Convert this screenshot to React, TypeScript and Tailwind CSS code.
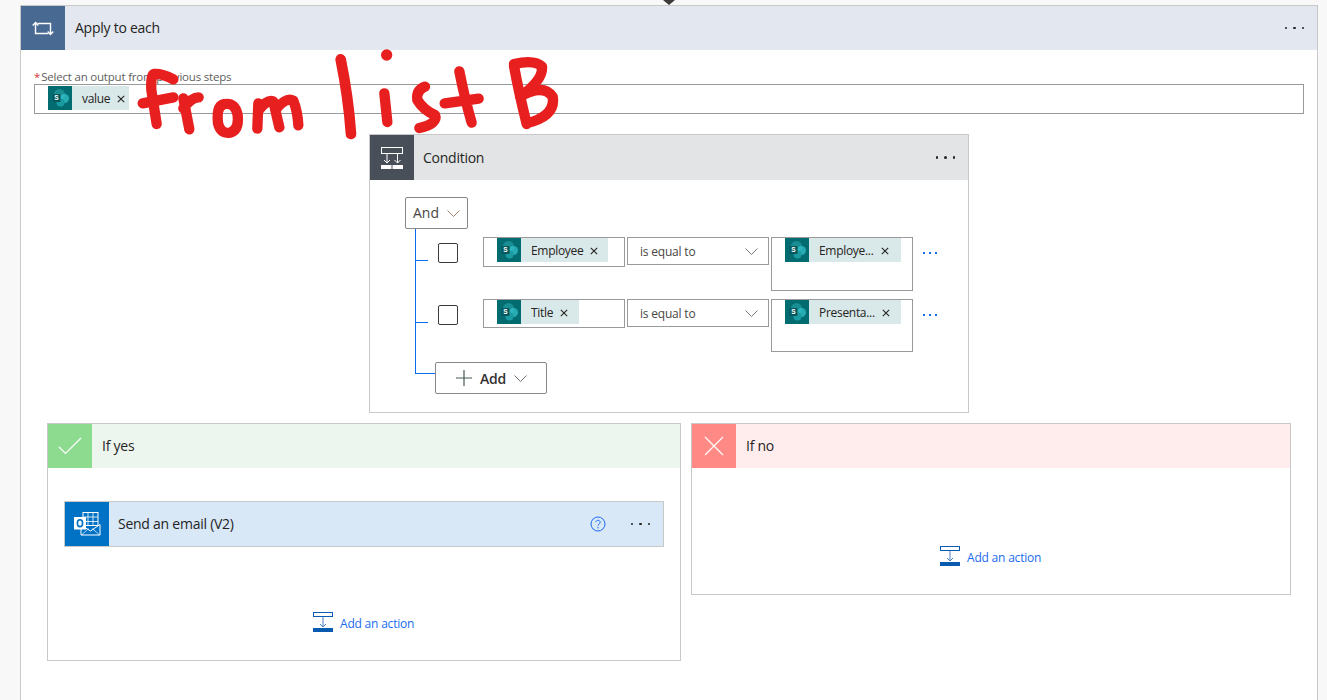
import React from "react";

const FONT = "font-['Open_Sans','Noto_Sans',sans-serif]";

function Dots({ color = "bg-[#252423]" }: { color?: string }) {
  return (
    <div className="flex gap-[6px] items-center">
      <span className={`w-[2.5px] h-[2.5px] rounded-full ${color}`} />
      <span className={`w-[2.5px] h-[2.5px] rounded-full ${color}`} />
      <span className={`w-[2.5px] h-[2.5px] rounded-full ${color}`} />
    </div>
  );
}

function BlueDots() {
  return (
    <div className="flex gap-1 items-center">
      <span className="w-[2px] h-[2px] bg-[#1a6cf0]" />
      <span className="w-[2px] h-[2px] bg-[#1a6cf0]" />
      <span className="w-[2px] h-[2px] bg-[#1a6cf0]" />
    </div>
  );
}

function SharePointIcon() {
  return (
    <div className="w-6 h-6 bg-[#036c70] flex items-center justify-center shrink-0">
      <svg width="24" height="24" viewBox="0 0 24 24">
        <circle cx="11.5" cy="8.5" r="5.5" fill="#1a8f93" />
        <circle cx="16.5" cy="12.5" r="4.5" fill="#37c6d0" opacity="0.7" />
        <circle cx="12.5" cy="16.5" r="4" fill="#1a9ba1" />
        <rect x="4.5" y="8" width="8" height="8" rx="1" fill="#04585c" />
        <text x="8.5" y="14.3" fontSize="6.5" fontWeight="700" fill="#fff" textAnchor="middle" fontFamily="Liberation Sans">S</text>
      </svg>
    </div>
  );
}

function Chip({ label, className }: { label: string; className: string }) {
  return (
    <div className={`flex items-center h-6 bg-[#d9e8e8] text-[12px] text-[#252423] ${className}`}>
      <SharePointIcon />
      <span className="ml-[10px] tracking-[-0.3px] mt-[1px] whitespace-nowrap">{label}</span>
      <svg className="ml-[7px] mt-[2px] shrink-0" width="8" height="8" viewBox="0 0 8 8" fill="none" stroke="#252423" strokeWidth="1.1">
        <path d="M.8.8l6.4 6.4M7.2.8L.8 7.2" />
      </svg>
    </div>
  );
}

function Chevron({ color = "#777" }: { color?: string }) {
  return (
    <svg width="13" height="7" viewBox="0 0 13 7" fill="none" stroke={color} strokeWidth="1">
      <path d="M.5.5l6 6 6-6" />
    </svg>
  );
}

function ConditionRow({ left, right, rowH, boxH }: { left: React.ReactNode; right: React.ReactNode; rowH: string; boxH: string }) {
  return (
    <div className="flex items-start">
      <div className="w-[12px] h-px bg-[#0a6cf0] mt-[23px]" />
      <div className="ml-[10px] mt-[6px] w-5 h-5 rounded-[2px] border border-[#3b3a39] bg-white" />
      <div className={`ml-[25px] w-[142px] border border-[#9a9a9a] pl-[13px] ${rowH}`}>{left}</div>
      <div className="ml-[2px] w-[142px] h-[28px] border border-[#9a9a9a] flex items-center pl-3 pr-[10px] justify-between text-[12px] text-[#484644]">
        <span className="tracking-[-0.2px] mt-[2px]">is equal to</span>
        <Chevron />
      </div>
      <div className={`ml-[2px] w-[142px] border border-[#9a9a9a] pl-[13px] ${boxH}`}>{right}</div>
      <div className="ml-[10px] mt-[15px]">
        <BlueDots />
      </div>
    </div>
  );
}

function AddAction() {
  return (
    <div className="flex items-center">
      <svg width="20" height="20" viewBox="0 0 20 20" fill="none">
        <rect x=".5" y=".5" width="19" height="4" stroke="#0a5bb0" />
        <path d="M10 5v10M7 12l3 3 3-3" stroke="#4a7fc0" />
        <rect y="16" width="20" height="4" fill="#0a5bb0" />
      </svg>
      <span className="ml-[7px] mt-[4px] text-[12px] text-[#1a6cf0] tracking-[-0.2px]">Add an action</span>
    </div>
  );
}

function Scribble() {
  return (
    <svg className="absolute left-[130px] top-[40px]" width="440" height="110" viewBox="0 0 1320 330" fill="none" stroke="#e81f1f" strokeWidth="31" strokeLinecap="round" strokeLinejoin="round">
      <path d="M130 118Q95 100 72 102Q62 105 64 150L80 252" />
      <path d="M38 190L130 172" />
      <path d="M160 175L178 268M160 205Q185 172 206 172" />
      <path d="M285 192Q258 195 264 250Q272 283 300 278Q328 270 323 225Q315 187 285 192Z" />
      <path d="M385 190L382 266M385 212Q410 178 430 184L448 262M440 205Q470 170 490 182Q503 215 505 256" />
      <path d="M632 58Q655 170 663 282" strokeWidth="32" />
      <path d="M763 160L772 246" />
      <circle cx="770" cy="45" r="17" fill="#e81f1f" stroke="none" />
      <path d="M885 140Q858 150 862 180Q880 210 915 225Q925 250 868 264" />
      <path d="M988 94Q1005 180 1025 248M944 190L1046 176" />
      <path d="M1152 78Q1165 150 1190 252M1152 72Q1215 58 1236 80Q1240 120 1170 170Q1240 130 1268 170Q1278 228 1190 250" />
    </svg>
  );
}

export default function App() {
  return (
    <div className={`relative h-[700px] w-[1327px] overflow-hidden bg-[#f8f8f8] pl-5 pr-[9px] pt-[5px] text-[#252423] ${FONT}`}>
      <div className="absolute left-[663px] top-0 w-0 h-0 border-l-[6px] border-r-[6px] border-t-[5px] border-l-transparent border-r-transparent border-t-[#3b3a39]" />

      {/* Apply to each */}
      <div className="border border-[#c8c8c8] bg-white h-[720px]">
        <div className="flex items-center h-[44px] bg-[#e3e7ef]">
          <div className="w-[44px] h-[44px] bg-[#486991] flex items-center justify-center">
            <svg width="22" height="15" viewBox="0 0 22 15" fill="none" stroke="#fff" strokeWidth="1.4">
              <path d="M.7 4.5L3.5 1.5 6.3 4.5M3.5 2v10.5h13" />
              <path d="M21.3 10.5l-2.8 3-2.8-3M18.5 13V2.5H5.5" />
            </svg>
          </div>
          <span className="ml-[10px] -mt-[2px] text-[14px] tracking-[-0.25px]">Apply to each</span>
          <div className="ml-auto mr-[13px]"><Dots /></div>
        </div>

        <div className="px-[13px] pt-5">
          <div className="h-[14px] flex items-center text-[11.5px] leading-none text-[#605e5c] tracking-[-0.2px]">
            <span className="text-[#d13438] mr-px">*</span>Select an output from previous steps
          </div>
          <div className="h-[30px] border border-[#9a9a9a] pl-[13px] pt-px">
            <Chip label="value" className="w-[81px]" />
          </div>
        </div>

        {/* Condition */}
        <div className="mx-auto mt-5 w-[600px] h-[279px] border border-[#c8c8c8] bg-white">
          <div className="flex items-center h-[45px] bg-[#e3e4e5]">
            <div className="w-[44px] h-[45px] bg-[#484f58] flex items-center justify-center">
              <svg width="24" height="24" viewBox="0 0 24 24" fill="none" stroke="#fff" strokeWidth="1">
                <rect x="1.5" y="1.5" width="21" height="6" />
                <path d="M7 7.5V17M4 14l3 3 3-3M17.5 7.5V17M14.5 14l3 3 3-3" />
                <rect x="1" y="19" width="10.5" height="4" fill="#fff" stroke="none" />
                <rect x="12.5" y="19" width="10.5" height="4" fill="#fff" stroke="none" />
              </svg>
            </div>
            <span className="ml-[9px] -mt-px text-[14px] tracking-[-0.25px]">Condition</span>
            <div className="ml-auto mr-[13px]"><Dots /></div>
          </div>

          <div className="ml-[35px] mt-[17px] w-[63px] h-8 border border-[#8a8886] rounded-[2px] flex items-center pl-[7px] gap-2 text-[14px] text-[#484644]">
            <span className="-mt-[2px]">And</span>
            <Chevron color="#a87f6a" />
          </div>
          <div className="ml-[45px] h-[145px] border-l border-[#0a6cf0] pt-2 flex flex-col gap-2">
            <ConditionRow
              rowH="h-[30px]"
              boxH="h-[54px]"
              left={<Chip label="Employee" className="w-[111px]" />}
              right={<Chip label="Employe..." className="w-[116px]" />}
            />
            <ConditionRow
              rowH="h-[29px]"
              boxH="h-[53px]"
              left={<Chip label="Title" className="w-[82px]" />}
              right={<Chip label="Presenta..." className="w-[116px]" />}
            />
            <div className="flex items-start mt-[2px]">
              <div className="w-[19px] h-px bg-[#0a6cf0] mt-[11px]" />
              <div className="w-[112px] h-8 border border-[#8a8886] rounded-[2px] bg-white flex items-center pl-5 text-[14px] font-semibold text-[#323130]">
                <svg width="16" height="16" viewBox="0 0 16 16" stroke="#4a5a50" strokeWidth="1.2">
                  <path d="M8 0v16M0 8h16" />
                </svg>
                <span className="ml-2 tracking-[-0.2px]">Add</span>
                <span className="ml-2"><Chevron color="#77706c" /></span>
              </div>
            </div>
          </div>
        </div>

        {/* Branches */}
        <div className="ml-[26px] mt-[10px] flex items-start gap-[10px]">
          <div className="w-[634px] h-[238px] border border-[#c8c8c8] bg-white">
            <div className="flex items-center h-[44px] bg-[#edf6ee]">
              <div className="w-[44px] h-[44px] bg-[#8cdb8f] flex items-center justify-center">
                <svg width="24" height="18" viewBox="0 0 24 18" fill="none" stroke="#fff" strokeWidth="1.2">
                  <path d="M1 10l6.5 6.5L23 1" />
                </svg>
              </div>
              <span className="ml-[10px] -mt-[2px] text-[14px] tracking-[-0.25px]">If yes</span>
            </div>
            <div className="ml-4 mt-[33px] w-[600px] h-[46px] border border-[#c8c8c8] bg-[#d8e8f7] flex items-center">
              <div className="w-[44px] h-[44px] bg-[#0072c6] flex items-center justify-center">
                <svg width="28" height="28" viewBox="0 0 28 28" fill="none">
                  <rect x="10" y="2.5" width="15" height="13" stroke="#fff" />
                  <path d="M15 2.5v13M20 2.5v13M10 7h15M10 11.5h15" stroke="#fff" strokeWidth=".8" />
                  <path d="M8 15v10h19V14.5L17.5 21z" fill="#0072c6" stroke="#fff" />
                  <path d="M8.5 25l7-6.5M26.5 25l-7-6.5" stroke="#fff" strokeWidth=".7" />
                  <rect x="1" y="7" width="12" height="12.5" fill="#fff" />
                  <ellipse cx="7" cy="13.2" rx="2.6" ry="3.4" fill="none" stroke="#0072c6" strokeWidth="1.6" />
                </svg>
              </div>
              <span className="ml-[9px] -mt-[2px] text-[14px] tracking-[-0.25px]">Send an email (V2)</span>
              <svg className="ml-auto" width="16" height="16" viewBox="0 0 16 16" fill="none">
                <circle cx="8" cy="8" r="7" stroke="#1a6cf0" />
                <path d="M5.8 6.2C6 3.6 10.2 3.8 10.2 6.2c0 1.7-2.2 1.7-2.2 3.6" stroke="#1a6cf0" />
                <circle cx="8" cy="11.7" r=".7" fill="#1a6cf0" />
              </svg>
              <div className="ml-[25px] mr-[13px]"><Dots /></div>
            </div>
            <div className="ml-[265px] mt-[64px]"><AddAction /></div>
          </div>

          <div className="w-[600px] h-[172px] border border-[#c8c8c8] bg-white">
            <div className="flex items-center h-[44px] bg-[#ffecec]">
              <div className="w-[44px] h-[44px] bg-[#ff8a85] flex items-center justify-center">
                <svg width="20" height="20" viewBox="0 0 20 20" fill="none" stroke="#fff" strokeWidth="1.1">
                  <path d="M1 1l18 18M19 1L1 19" />
                </svg>
              </div>
              <span className="ml-[10px] -mt-[2px] text-[14px] tracking-[-0.25px]">If no</span>
            </div>
            <div className="ml-[248px] mt-[77px]"><AddAction /></div>
          </div>
        </div>
      </div>

      <Scribble />
    </div>
  );
}
